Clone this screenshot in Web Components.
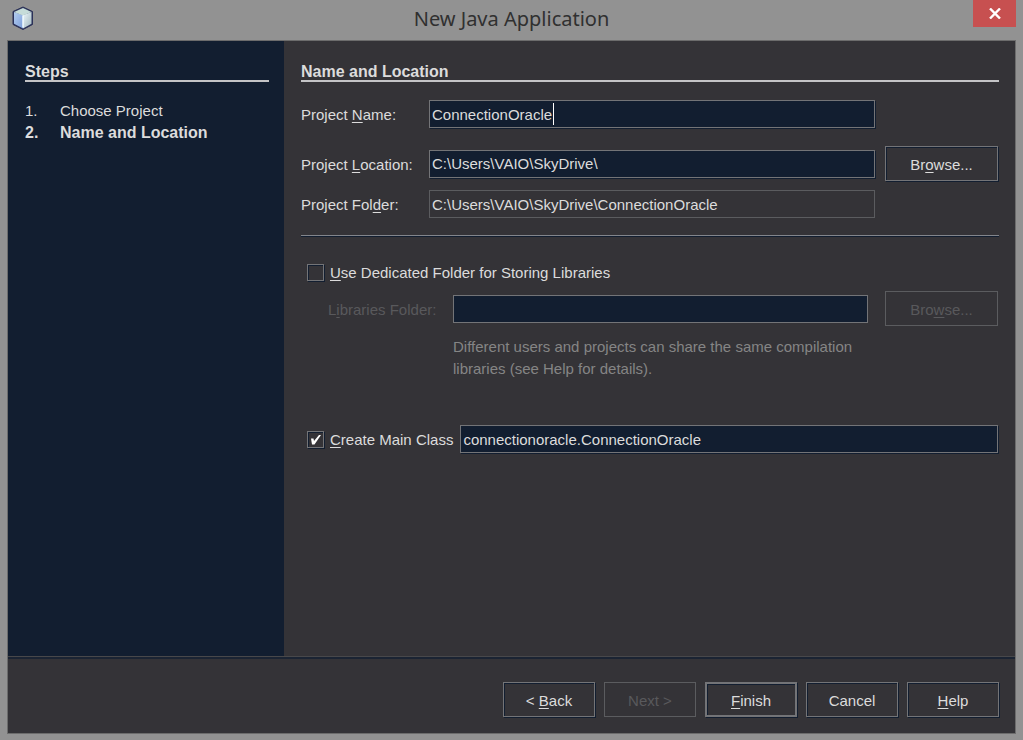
<!DOCTYPE html>
<html lang="en">
<head>
<meta charset="utf-8">
<meta name="viewport" content="width=device-width, initial-scale=1">
<title>New Java Application</title>
<style>
  :root {
    --frame: #929292;
    --panel: #343337;
    --navy: #121e30;
    --line: #737477;
    --line-dim: #5b5c5f;
    --text: #dcdcdc;
    --text-dim: #59595c;
    --text-hint: #858585;
  }
  body {
    margin: 0;
    background: var(--frame);
    color: var(--text);
    font: 15px/22px "Liberation Sans", Arial, sans-serif;
  }
  u { text-decoration: underline; text-underline-offset: 2px; text-decoration-skip-ink: none; }
</style>
</head>
<body>
<app-dialog heading="New Java Application">
  <step-list slot="steps" heading="Steps">
    <li>Choose Project</li>
    <li class="current">Name and Location</li>
  </step-list>

  <form-panel heading="Name and Location">
    <field-row value="ConnectionOracle" caret>Project <u>N</u>ame:</field-row>
    <field-row value="C:\Users\VAIO\SkyDrive\" class="location">Project <u>L</u>ocation:
      <push-button slot="action" class="browse">Br<u>o</u>wse...</push-button>
    </field-row>
    <field-row value="C:\Users\VAIO\SkyDrive\ConnectionOracle" readonly>Project Fol<u>d</u>er:</field-row>
    <rule-line></rule-line>
    <check-option><u>U</u>se Dedicated Folder for Storing Libraries</check-option>
    <field-row value="" disabled class="libraries">L<u>i</u>braries Folder:
      <push-button slot="action" class="browse" disabled>Bro<u>w</u>se...</push-button>
      <span slot="hint">Different users and projects can share the same compilation libraries (see Help for details).</span>
    </field-row>
    <check-option checked value="connectionoracle.ConnectionOracle" class="main-class"><u>C</u>reate Main Class</check-option>
  </form-panel>

  <push-button slot="buttons">&lt; <u>B</u>ack</push-button>
  <push-button slot="buttons" disabled>Next &gt;</push-button>
  <push-button slot="buttons" primary><u>F</u>inish</push-button>
  <push-button slot="buttons">Cancel</push-button>
  <push-button slot="buttons"><u>H</u>elp</push-button>
</app-dialog>

<script>
class Base extends HTMLElement {
  connectedCallback() {
    if (this.shadowRoot) return;
    this.attachShadow({ mode: "open" }).innerHTML =
      "<style>*{box-sizing:border-box}:host{box-sizing:border-box}</style>" + this.view();
  }
  attr(name) { return (this.getAttribute(name) || "").replace(/"/g, "&quot;"); }
}

const inputStyle = `
  input[type=text] {
    width: 100%; min-width: 0; height: 28px; margin: 0; padding: 1px 2px;
    font: inherit; color: var(--text); background: var(--navy);
    border: 1px solid var(--line); border-radius: 0; outline: 0;
    box-shadow: 1px 1px var(--navy);
  }
  input[readonly] { background: var(--panel); border-color: var(--line-dim); box-shadow: none; }
  input:disabled { border-color: var(--line); box-shadow: none; }`;

customElements.define("app-dialog", class extends Base {
  view() { return `
    <style>
      :host { display: flex; flex-direction: column; min-height: 100vh; padding: 0 7px 6px; }
      header { display: grid; grid-template-columns: 1fr auto 1fr; align-items: start; height: 40px; }
      header svg { margin: 6px 0 0 5px; }
      h1 { margin: 0; font: 20px/38px "Noto Sans", "Open Sans", sans-serif; color: #303030; }
      .close { justify-self: end; display: flex; align-items: center; justify-content: center;
        width: 43px; height: 27px; padding: 0; border: 0; background: #c75050; }
      .close svg { margin: 0; }
      .body { flex: 1; display: flex; flex-direction: column; border: 1px solid #6c6c6c; background: var(--panel); }
      main { flex: 1; display: grid; grid-template-columns: 276px minmax(0, 1fr); }
      footer { display: flex; justify-content: flex-end; gap: 9px; padding: 25px 16px 16px;
        border-top: 1px solid #48484a; box-shadow: inset 0 2px #1b2433; }
    </style>
    <header>
      <svg width="22" height="25" viewBox="0 0 22 25" aria-hidden="true">
        <defs>
          <linearGradient id="l" x2="1" y2="1"><stop stop-color="#b4cdf0"/><stop offset="1" stop-color="#7c9fdc"/></linearGradient>
          <linearGradient id="r" x2="1" y2="1"><stop stop-color="#eef7fa"/><stop offset="1" stop-color="#9fb6bf"/></linearGradient>
        </defs>
        <path d="M11 1 20.500 5.500V18.500L11 23.500 1 18.500V5.500Z" fill="#2b3158" stroke="#2b3158" stroke-width="1" stroke-linejoin="round"/>
        <path d="M2 6 11 9V22.500L2 17.800Z" fill="url(#l)"/>
        <path d="M19.500 6 11 9V22.500L19.500 17.800Z" fill="url(#r)"/>
        <path d="M11 2 19.500 6 11 9.500 2 6Z" fill="#c6dcd9"/>
        <path d="M11 9.500V21.500" stroke="#f2fbff" stroke-width="1.500"/>
      </svg>
      <h1>${this.attr("heading")}</h1>
      <button class="close" type="button" aria-label="Close">
        <svg width="12" height="11" viewBox="0 0 12 11"><path d="M1 0.500 11 10.500M11 0.500 1 10.500" stroke="#fff" stroke-width="2.400"/></svg>
      </button>
    </header>
    <div class="body">
      <main><slot name="steps"></slot><slot></slot></main>
      <footer><slot name="buttons"></slot></footer>
    </div>`; }
});

customElements.define("panel-heading", class extends Base {
  view() { return `
    <style>
      :host { display: block; border-bottom: 2px solid #c4c4c6; }
      h2 { margin: 0; padding-top: 3px; font-size: 16px; line-height: 17px; }
    </style>
    <h2><slot></slot></h2>`; }
});

customElements.define("step-list", class extends Base {
  view() { return `
    <style>
      :host { display: block; padding: 19px 15px 0 17px; background: var(--navy); }
      ol { margin: 18px 0 0; padding: 0; list-style: none; }
      .row { display: grid; grid-template-columns: 35px 1fr; }
      .current { font-weight: bold; font-size: 16px; }
    </style>
    <panel-heading>${this.attr("heading")}</panel-heading>
    <ol>${[...this.children].map((li, i) =>
      `<li class="row ${li.className}"><span>${i + 1}.</span><span>${li.textContent}</span></li>`).join("")}</ol>`; }
});

customElements.define("form-panel", class extends Base {
  view() { return `
    <style>
      :host { display: flex; flex-direction: column; padding: 19px 16px 24px 17px; }
      panel-heading { margin-bottom: 18px; }
      ::slotted(.location) { margin: 18px 0 9px; }
      ::slotted(rule-line) { margin: 17px 0 24px; }
      ::slotted(.libraries) { margin: 7px 0 45px; }
    </style>
    <panel-heading>${this.attr("heading")}</panel-heading>
    <slot></slot>`; }
});

customElements.define("field-row", class extends Base {
  view() {
    const state = ["readonly", "disabled"].filter(n => this.hasAttribute(n)).join(" ");
    return `
    <style>
      :host { display: grid; grid-template-columns: 128px minmax(0, 1fr) 123px; align-items: center; padding-right: 1px; }
      :host(.libraries) { grid-template-columns: 125px minmax(0, 1fr) 130px; padding-left: 27px; }
      label { padding-top: 2px; white-space: nowrap; }
      :host([disabled]) label { color: var(--text-dim); }
      .box { position: relative; display: flex; }
      .caret { position: absolute; left: 124px; top: 3px; width: 1px; height: 22px; background: #fff; }
      slot[name=action] { display: flex; justify-content: flex-end; }
      slot[name=hint] { display: block; grid-column: 2; padding-top: 10px; color: var(--text-hint); }
      ${inputStyle}
    </style>
    <label for="field"><slot></slot></label>
    <div class="box"><input id="field" type="text" value="${this.attr("value")}" ${state}>
      ${this.hasAttribute("caret") ? '<span class="caret"></span>' : ""}</div>
    <slot name="action"></slot>
    ${this.querySelector("[slot=hint]") ? '<slot name="hint"></slot>' : ""}`; }
});

customElements.define("check-option", class extends Base {
  view() { return `
    <style>
      :host { display: flex; align-items: center; gap: 7px; padding: 0 1px 0 6px; }
      label { display: flex; align-items: center; gap: 6px; white-space: nowrap; }
      label span { padding-top: 2px; }
      input[type=checkbox] { appearance: none; flex: none; width: 17px; height: 17px; margin: 0; border: 1px solid var(--line);
        box-shadow: 1px 1px var(--navy), inset 1px 1px var(--navy); }
      label .tick { position: relative; display: flex; padding: 0; }
      .tick svg { position: absolute; inset: 2px; }
      ${inputStyle}
    </style>
    <label><span class="tick"><input type="checkbox" ${this.hasAttribute("checked") ? "checked" : ""}>
      ${this.hasAttribute("checked") ? '<svg width="13" height="13" viewBox="0 0 13 13"><path d="M2 5.500H4.500L5 8 10 2H12L5.500 11.500H3Z" fill="#fff"/></svg>' : ""}</span>
      <span><slot></slot></span></label>
    ${this.hasAttribute("value") ? `<input type="text" aria-label="Main class name" value="${this.attr("value")}">` : ""}`; }
});

customElements.define("rule-line", class extends Base {
  view() { return `
    <style>
      :host { display: block; }
      hr { margin: 0; border: 0; height: 1px; background: #83868c; box-shadow: 0 1px var(--navy); }
    </style><hr>`; }
});

customElements.define("push-button", class extends Base {
  view() { return `
    <style>
      :host { display: block; width: 92px; }
      :host(.browse) { width: 113px; }
      button { width: 100%; height: 35px; padding: 3px 0 0; font: inherit; color: var(--text);
        background: var(--panel); border: 1px solid var(--line); border-radius: 0;
        box-shadow: 1px 1px var(--navy), inset 1px 1px var(--navy); }
      :host([primary]) button { border-width: 2px; }
      button:disabled { color: var(--text-dim); border-color: var(--line-dim); box-shadow: none; }
    </style>
    <button type="button" ${this.hasAttribute("disabled") ? "disabled" : ""}><slot></slot></button>`; }
});
</script>
</body>
</html>
